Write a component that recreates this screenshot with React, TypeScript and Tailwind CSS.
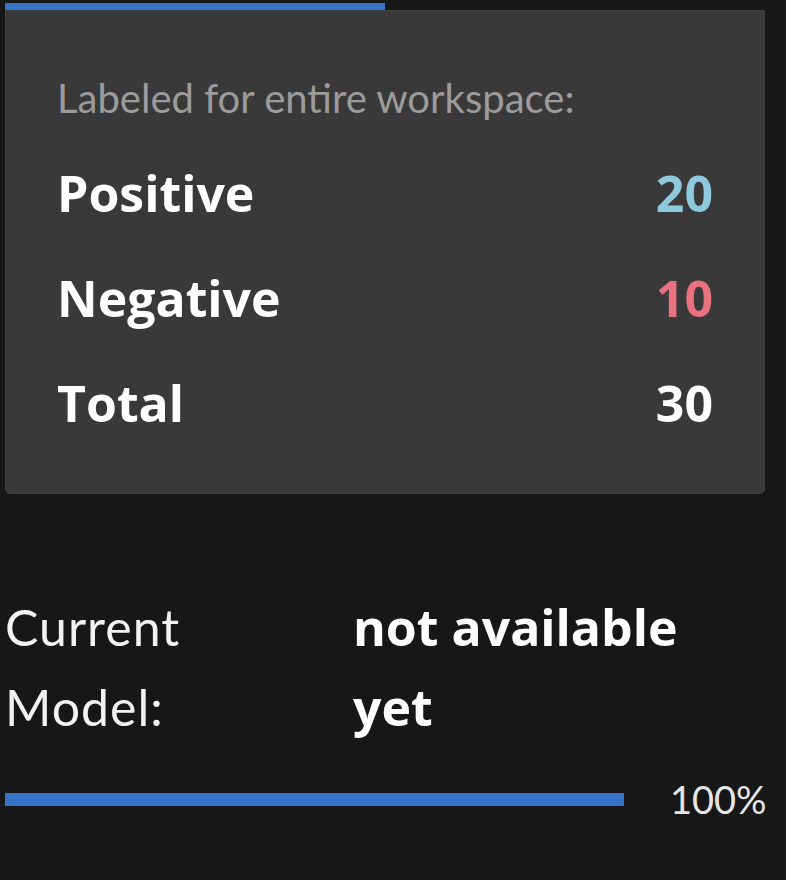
const rows = [
  { label: 'Positive', value: 20, color: 'text-[#8fc9de]' },
  { label: 'Negative', value: 10, color: 'text-[#e8727f]' },
  { label: 'Total', value: 30, color: 'text-white' },
]

function LabelCounts() {
  return (
    <div className="ml-[5px] w-[760px]">
      <div className="mt-[3px] h-[7px] w-[380px] bg-[#3574c8]" />
      <div className="rounded-b-[5px] border border-[#404040] bg-[#393939] px-[51px] pb-[37px] pt-[62px]">
        <p className="text-[40px] leading-[50px] text-[#9c9c9c]">Labeled for entire workspace:</p>
        <div className="mt-[18px] font-['Open_Sans',sans-serif] [font-variant-ligatures:none]">
          {rows.map((r) => (
            <div key={r.label} className="flex justify-between text-[50px] font-bold leading-[105px]">
              <span className="text-white">{r.label}</span>
              <span className={r.color}>{r.value}</span>
            </div>
          ))}
        </div>
      </div>
    </div>
  )
}

function ModelStatus() {
  return (
    <div className="ml-[5px] mt-[93px]">
      <div className="grid grid-cols-[348px_1fr] text-[50px] leading-[80px]">
        <div className="tracking-[1px] text-[#f2f2f2]">
          <div>Current</div>
          <div>Model:</div>
        </div>
        <div className="font-['Open_Sans',sans-serif] font-bold text-white">
          <div>not available</div>
          <div>yet</div>
        </div>
      </div>
      <div className="mt-[29px] flex items-center">
        <div className="h-[13px] w-[619px] bg-[#3574c8]" />
        <span className="ml-[46px] text-[38px] leading-[46px] text-[#e6e6e6]">100%</span>
      </div>
    </div>
  )
}

export default function App() {
  return (
    <div className="min-h-[880px] w-[786px] overflow-hidden bg-[#171717] font-['Lato',sans-serif]">
      <LabelCounts />
      <ModelStatus />
    </div>
  )
}
